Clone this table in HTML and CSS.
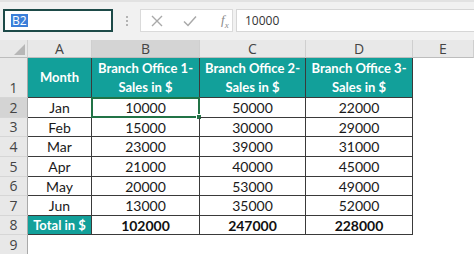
FILE: index.html
```html
<!DOCTYPE html>
<html>
<head>
<meta charset="utf-8">
<link rel="stylesheet" href="styles.css">
</head>
<body>
<div class="app">
  <div class="fbar">
    <div class="namebox"><span class="nsel">B2</span></div>
    <div class="grip"><i></i><i></i><i></i></div>
    <div class="fbtns">
      <svg class="ico" width="14" height="14" viewBox="0 0 14 14"><path d="M2 2 L12 12 M12 2 L2 12" stroke="#a9a9a9" stroke-width="1.4" fill="none"/></svg>
      <svg class="ico" width="16" height="14" viewBox="0 0 16 14"><path d="M2 7.5 L6 11.5 L14 2.5" stroke="#a9a9a9" stroke-width="1.5" fill="none"/></svg>
      <span class="fx"><i>f</i><sub><i>x</i></sub></span>
    </div>
    <div class="finput">10000</div>
  </div>
  <div class="sheet">
    <div class="ch corner"><span class="tri"></span></div>
    <div class="ch">A</div>
    <div class="ch chsel">B</div>
    <div class="ch">C</div>
    <div class="ch">D</div>
    <div class="ch">E</div>

    <div class="rh rh1">1</div>
    <div class="c hd">Month</div>
    <div class="c hd">Branch Office 1-<br>Sales in $</div>
    <div class="c hd">Branch Office 2-<br>Sales in $</div>
    <div class="c hd">Branch Office 3-<br>Sales in $</div>
    <div class="e"></div>

    <div class="rh rhsel">2</div>
    <div class="c">Jan</div>
    <div class="c active">10000<span class="selbox"><span class="handle"></span></span></div>
    <div class="c">50000</div>
    <div class="c">22000</div>
    <div class="e"></div>

    <div class="rh">3</div>
    <div class="c">Feb</div>
    <div class="c">15000</div>
    <div class="c">30000</div>
    <div class="c">29000</div>
    <div class="e"></div>

    <div class="rh">4</div>
    <div class="c">Mar</div>
    <div class="c">23000</div>
    <div class="c">39000</div>
    <div class="c">31000</div>
    <div class="e"></div>

    <div class="rh">5</div>
    <div class="c">Apr</div>
    <div class="c">21000</div>
    <div class="c">40000</div>
    <div class="c">45000</div>
    <div class="e"></div>

    <div class="rh">6</div>
    <div class="c">May</div>
    <div class="c">20000</div>
    <div class="c">53000</div>
    <div class="c">49000</div>
    <div class="e"></div>

    <div class="rh">7</div>
    <div class="c">Jun</div>
    <div class="c">13000</div>
    <div class="c">35000</div>
    <div class="c">52000</div>
    <div class="e"></div>

    <div class="rh">8</div>
    <div class="c hd">Total in $</div>
    <div class="c tot">102000</div>
    <div class="c tot">247000</div>
    <div class="c tot">228000</div>
    <div class="e"></div>

    <div class="rh last">9</div>
    <div class="blank"></div>
  </div>
</div>
</body>
</html>
```
FILE: styles.css
```css
* { box-sizing: border-box; }
html, body { margin: 0; padding: 0; }
body { width: 474px; height: 254px; overflow: hidden; background: #fff; font-family: "Lato", "Liberation Sans", sans-serif; }

.app { display: flex; flex-direction: column; height: 254px; }

.fbar {
  height: 40px;
  flex: none;
  display: flex;
  align-items: flex-start;
  padding: 7px 0 0 3px;
  background: #f1f1f1;
  border-top: 2px solid #e2e2e2;
}
.namebox {
  width: 110px;
  height: 23px;
  border: 2px solid #1d4a48;
  background: #fff;
  display: flex;
  align-items: center;
  padding-left: 6px;
  font-family: "Open Sans", "Liberation Sans", sans-serif;
  font-size: 12px;
}
.nsel { background: #3b7fd9; color: #fff; line-height: 13px; padding: 0 1px; }
.grip {
  width: 27px;
  height: 23px;
  display: flex;
  flex-direction: column;
  align-items: center;
  justify-content: center;
  gap: 2px;
}
.grip i { width: 2px; height: 2px; background: #b3b3b3; display: block; }
.fbtns {
  width: 93px;
  height: 23px;
  background: #fff;
  border: 1px solid #dadada;
  display: flex;
  align-items: center;
  padding-left: 9px;
  gap: 18px;
}
.fx { font-family: "Liberation Serif", serif; color: #8a8a8a; font-size: 13px; margin-left: 5px; }
.fx sub { font-size: 9px; }
.finput {
  flex: 1;
  margin-left: 3px;
  height: 23px;
  background: #fff;
  border: 1px solid #d6d6d6;
  border-right: none;
  display: flex;
  align-items: center;
  padding-left: 8px;
  font-family: "Open Sans", "Liberation Sans", sans-serif;
  font-size: 12px;
  color: #333;
}

.sheet {
  flex: 1;
  display: grid;
  grid-template-columns: 28px 64px 108px 106px 107px 1fr;
  grid-template-rows: 18px 40px 20px 19px 20px 20px 19px 20px 19px 1fr;
}
.ch {
  background: #e8e8e8;
  border-right: 1px solid #cfcfcf;
  border-bottom: 1px solid #bdbdbd;
  display: flex;
  align-items: center;
  justify-content: center;
  font-family: "Open Sans", "Liberation Sans", sans-serif;
  font-size: 14px;
  color: #444;
}
.ch:last-child { border-right: none; }
.chsel { background: #d4d4d4; }
.corner { position: relative; background: #e8e8e8; }
.tri {
  position: absolute;
  right: 2px;
  bottom: 2px;
  width: 0; height: 0;
  border-left: 11px solid transparent;
  border-bottom: 11px solid #b7b7b7;
}
.rh {
  background: #e8e8e8;
  border-right: 1px solid #a9a9a9;
  border-bottom: 1px solid #d6d6d6;
  display: flex;
  align-items: flex-end;
  justify-content: center;
  font-family: "Open Sans", "Liberation Sans", sans-serif;
  font-size: 14px;
  line-height: 19px;
  color: #444;
}
.rhsel { background: #d4d4d4; }
.rh.last { border-bottom: none; }
.c {
  border-right: 1px solid #3a3a3a;
  border-bottom: 1px solid #3a3a3a;
  display: flex;
  align-items: center;
  justify-content: center;
  font-size: 14px;
  color: #1a1a1a;
  text-align: center;
  position: relative;
}
.hd {
  background: #12a09a;
  color: #fff;
  font-weight: 700;
  font-size: 13px;
  line-height: 19px;
}
.tot { font-weight: 700; color: #111; }
.e { background: #fff; }
.blank { grid-column: 2 / 7; background: #fff; }
.selbox {
  position: absolute;
  left: -1px; top: -1px; right: -1px; bottom: -1px;
  border: 2px solid #217346;
}
.handle {
  position: absolute;
  right: -4px;
  bottom: -4px;
  width: 6px;
  height: 6px;
  background: #217346;
  border: 1px solid #fff;
}
```
